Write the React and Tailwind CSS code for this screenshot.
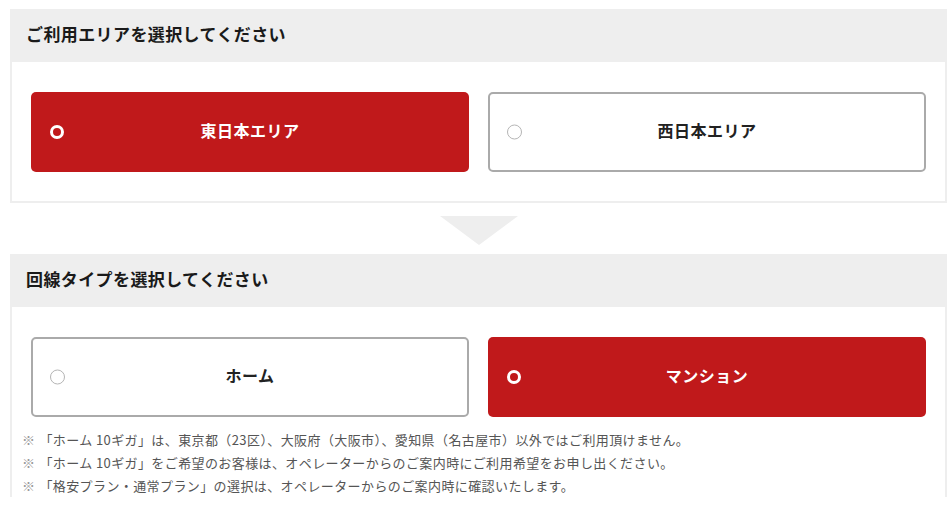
const font = { fontFamily: '"Noto Sans CJK JP", "Noto Sans", sans-serif' };

function Radio({ checked }) {
  if (checked) {
    return <span className="block w-[14px] h-[14px] rounded-full border-[3px] border-white bg-[#c0191b]" />;
  }
  return <span className="block w-[15px] h-[15px] rounded-full border border-[#b5b5b5] bg-white" />;
}

function Choice({ label, checked }) {
  return (
    <div
      className={
        "relative flex items-center justify-center h-[80px] rounded-[5px] " +
        (checked ? "bg-[#c0191b] text-white" : "bg-white border-2 border-[#aaaaaa] text-[#222]")
      }
    >
      <span className={"absolute top-1/2 -translate-y-1/2 " + (checked ? "left-[19px]" : "left-[17px]")}>
        <Radio checked={checked} />
      </span>
      <span className="relative -top-[2px] text-[16px] font-bold tracking-[0.5px]">{label}</span>
    </div>
  );
}

function Section({ title, children, open }) {
  return (
    <div>
      <div className="h-[53px] bg-[#eeeeee] flex items-center pl-[16px] pb-[4px]">
        <h2 className="text-[17px] font-bold text-[#1a1a1a] tracking-[0.4px]">{title}</h2>
      </div>
      <div className={"border-2 border-t-0 border-[#eeeeee] px-[19px] pt-[30px] " + (open ? "border-b-0 pb-0" : "pb-[29px]")}>
        {children}
      </div>
    </div>
  );
}

const notes = [
  "「ホーム 10ギガ」は、東京都（23区）、大阪府（大阪市）、愛知県（名古屋市）以外ではご利用頂けません。",
  "「ホーム 10ギガ」をご希望のお客様は、オペレーターからのご案内時にご利用希望をお申し出ください。",
  "「格安プラン・通常プラン」の選択は、オペレーターからのご案内時に確認いたします。",
];

export default function App() {
  return (
    <div className="bg-white w-[952px] h-[506px] overflow-hidden" style={font}>
      <div className="ml-[10px] w-[937px] pt-[9px]">
        <Section title="ご利用エリアを選択してください">
          <div className="grid grid-cols-2 gap-[19px]">
            <Choice label="東日本エリア" checked />
            <Choice label="西日本エリア" />
          </div>
        </Section>

        <div className="flex justify-center pt-[13px] pb-[9px]">
          <svg width="78" height="29" viewBox="0 0 78 29">
            <polygon points="0,0 78,0 39,29" fill="#eeeeee" />
          </svg>
        </div>

        <Section title="回線タイプを選択してください" open>
          <div className="grid grid-cols-2 gap-[19px]">
            <Choice label="ホーム" />
            <Choice label="マンション" checked />
          </div>
          <ul className="mt-[11px] -ml-[9px] text-[13px] leading-[23px] text-[#555] tracking-[0.4px]">
            {notes.map((n, i) => (
              <li key={i} className="flex">
                <span className="text-[#999] mr-[4px]">※</span>
                <span>{n}</span>
              </li>
            ))}
          </ul>
        </Section>
      </div>
    </div>
  );
}
